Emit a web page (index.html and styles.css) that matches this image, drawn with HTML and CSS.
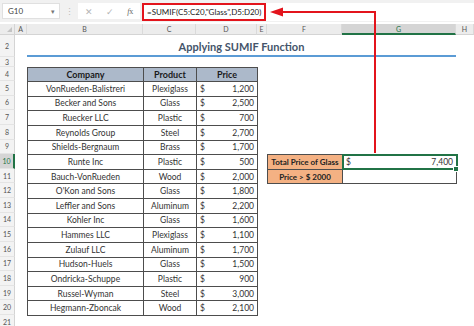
FILE: index.html
```html
<!DOCTYPE html>
<html lang="en">
<head>
  <meta charset="UTF-8" />
  <title>Applying SUMIF Function</title>
  <link rel="stylesheet" href="styles.css">
</head>
<body>

  <div class="formula-bar">
    <div class="namebox"><span>G10</span><span class="caret">&#9662;</span></div>
    <span class="grip">&#8942;</span>
    <div class="fx-buttons">
      <span>&#10005;</span>
      <span>&#10003;</span>
      <span class="fx"><i>f</i>x</span>
    </div>
    <div class="formula-input">
      <div class="formula">=SUMIF(C5:C20,"Glass",D5:D20)</div>
    </div>
  </div>

  <div class="sheet">
    <div class="corner"></div>
    <div class="colhead">A</div>
    <div class="colhead">B</div>
    <div class="colhead">C</div>
    <div class="colhead">D</div>
    <div class="colhead">E</div>
    <div class="colhead">F</div>
    <div class="colhead active">G</div>
    <div class="colhead">H</div>

    <div class="rowhead">2</div>
    <div class="rowhead">3</div>
    <div class="rowhead">4</div>
    <div class="rowhead">5</div>
    <div class="rowhead">6</div>
    <div class="rowhead">7</div>
    <div class="rowhead">8</div>
    <div class="rowhead">9</div>
    <div class="rowhead active">10</div>
    <div class="rowhead">11</div>
    <div class="rowhead">12</div>
    <div class="rowhead">13</div>
    <div class="rowhead">14</div>
    <div class="rowhead">15</div>
    <div class="rowhead">16</div>
    <div class="rowhead">17</div>
    <div class="rowhead">18</div>
    <div class="rowhead">19</div>
    <div class="rowhead">20</div>
    <div class="rowhead">21</div>

    <div class="title">Applying SUMIF Function</div>

    <table class="data">
      <colgroup>
        <col style="width:116px">
        <col style="width:53px">
        <col style="width:61px">
      </colgroup>
      <thead>
        <tr><th>Company</th><th>Product</th><th>Price</th></tr>
      </thead>
      <tbody id="rows"></tbody>
    </table>

    <table class="summary">
      <colgroup>
        <col style="width:75px">
        <col style="width:114px">
      </colgroup>
      <tr>
        <th>Total Price of Glass</th>
        <td class="selected"><span class="cur">$</span>7,400</td>
      </tr>
      <tr>
        <th>Price &gt; $ 2000</th>
        <td></td>
      </tr>
    </table>
  </div>

  <svg class="arrow" width="474" height="326" viewBox="0 0 474 326">
    <polyline points="281,12 375,12 375,153" fill="none" stroke="#e3141c" stroke-width="2" />
    <polygon points="270,12 283,7.5 283,16.5" fill="#e3141c" />
  </svg>

  <script>
    const items = [
      ["VonRueden-Balistreri", "Plexiglass", "1,200"],
      ["Becker and Sons", "Glass", "2,500"],
      ["Ruecker LLC", "Plastic", "700"],
      ["Reynolds Group", "Steel", "2,700"],
      ["Shields-Bergnaum", "Brass", "1,700"],
      ["Runte Inc", "Plastic", "500"],
      ["Bauch-VonRueden", "Wood", "2,000"],
      ["O'Kon and Sons", "Glass", "1,800"],
      ["Leffler and Sons", "Aluminum", "2,200"],
      ["Kohler Inc", "Glass", "1,600"],
      ["Hammes LLC", "Plexiglass", "1,100"],
      ["Zulauf LLC", "Aluminum", "1,700"],
      ["Hudson-Huels", "Glass", "1,500"],
      ["Ondricka-Schuppe", "Plastic", "900"],
      ["Russel-Wyman", "Steel", "3,000"],
      ["Hegmann-Zboncak", "Wood", "2,100"]
    ];

    const tbody = document.getElementById("rows");
    items.forEach(([company, product, price]) => {
      const tr = document.createElement("tr");
      tr.innerHTML = `<td>${company}</td><td>${product}</td>` +
        `<td class="price"><span class="cur">$</span>${price}</td>`;
      tbody.appendChild(tr);
    });
  </script>
</body>
</html>
```

FILE: styles.css
```css
* {
  margin: 0;
  padding: 0;
  box-sizing: border-box;
}

body {
  position: relative;
  width: 474px;
  height: 326px;
  overflow: hidden;
  background: #fff;
  font-family: Lato, 'Liberation Sans', sans-serif;
  color: #333;
}

/* formula bar */
.formula-bar {
  height: 22px;
  display: flex;
  align-items: center;
  padding-left: 2px;
  background: #f1f1f1;
}

.namebox {
  width: 58px;
  height: 16px;
  display: flex;
  align-items: center;
  justify-content: space-between;
  padding: 0 4px 0 5px;
  background: #fff;
  border: 1px solid #e0e0e0;
  font-size: 8px;
  color: #444;
}

.caret {
  font-size: 7px;
  color: #777;
}

.grip {
  width: 18px;
  text-align: center;
  font-size: 9px;
  color: #bbb;
}

.fx-buttons {
  width: 62px;
  height: 16px;
  display: flex;
  align-items: center;
  justify-content: space-around;
  background: #fff;
  font-size: 9px;
  color: #b5b5b5;
}

.fx {
  font-family: 'Liberation Serif', serif;
  font-size: 8px;
  color: #666;
}

.formula-input {
  flex: 1;
  height: 18px;
  margin: 2px 0 0 2px;
  background: #fff;
}

.formula {
  width: 124px;
  height: 18px;
  padding-left: 3px;
  border: 2px solid #e3141c;
  font-size: 8px;
  line-height: 14px;
  color: #222;
  white-space: nowrap;
}

/* sheet */
.sheet {
  display: grid;
  grid-template-columns: 15px 12px 116px 53px 61px 10px 75px 114px 1fr;
  grid-template-rows: 11px 22px 10px 14px repeat(17, 14.625px);
  margin-top: 2px;
}

.corner {
  grid-column: 1;
  grid-row: 1;
  position: relative;
  background: #ececec;
  border-right: 1px solid #d4d4d4;
  border-bottom: 1px solid #d4d4d4;
}

.corner::after {
  content: "";
  position: absolute;
  right: 2px;
  bottom: 2px;
  border-left: 5px solid transparent;
  border-bottom: 5px solid #c4c4c4;
}

.colhead {
  grid-row: 1;
  display: flex;
  align-items: center;
  justify-content: center;
  background: #ececec;
  border-right: 1px solid #dadada;
  border-bottom: 1px solid #d4d4d4;
  font-size: 7px;
  color: #555;
}

.colhead.active {
  background: #d5d5d5;
  border-bottom: 2px solid #217346;
  color: #217346;
}

.rowhead {
  grid-column: 1;
  display: flex;
  align-items: center;
  justify-content: center;
  background: #f3f3f3;
  border-right: 1px solid #d4d4d4;
  border-bottom: 1px solid #e4e4e4;
  font-size: 7px;
  color: #555;
}

.rowhead:first-of-type {
  align-items: flex-end;
  padding-bottom: 2px;
}

.rowhead.active {
  background: #d5d5d5;
  border-right: 2px solid #217346;
  color: #217346;
}

.title {
  grid-column: 3 / 9;
  grid-row: 2;
  display: flex;
  align-items: center;
  justify-content: center;
  padding-top: 2px;
  border-bottom: 2px solid #5b9bd5;
  font-size: 11px;
  font-weight: bold;
  color: #44546a;
}

/* tables */
table {
  border-collapse: collapse;
  table-layout: fixed;
  font-size: 8.5px;
}

th, td {
  border: 1px solid #4d4d4d;
  text-align: center;
  white-space: nowrap;
  padding: 0 3px;
}

.cur {
  float: left;
}

.data {
  grid-column: 3 / 6;
  grid-row: 4 / 21;
  width: 230px;
}

.data thead tr {
  height: 14px;
}

.data tbody tr {
  height: 14.625px;
}

.data th {
  background: #acb9ca;
  font-size: 9px;
  color: #1a1a1a;
}

.data .price {
  text-align: right;
}

.summary {
  grid-column: 7 / 9;
  grid-row: 10 / 12;
  width: 189px;
}

.summary tr {
  height: 14.625px;
}

.summary th {
  padding: 0 1px;
  background: #f4b183;
  font-size: 8px;
  color: #222;
}

.summary td {
  text-align: right;
}

.summary .selected {
  position: relative;
  outline: 2px solid #217346;
  outline-offset: -1px;
}

.summary .selected::after {
  content: "";
  position: absolute;
  right: -3px;
  bottom: -3px;
  width: 4px;
  height: 4px;
  background: #217346;
  border: 1px solid #fff;
}

.arrow {
  position: absolute;
  top: 0;
  left: 0;
  pointer-events: none;
}
```
